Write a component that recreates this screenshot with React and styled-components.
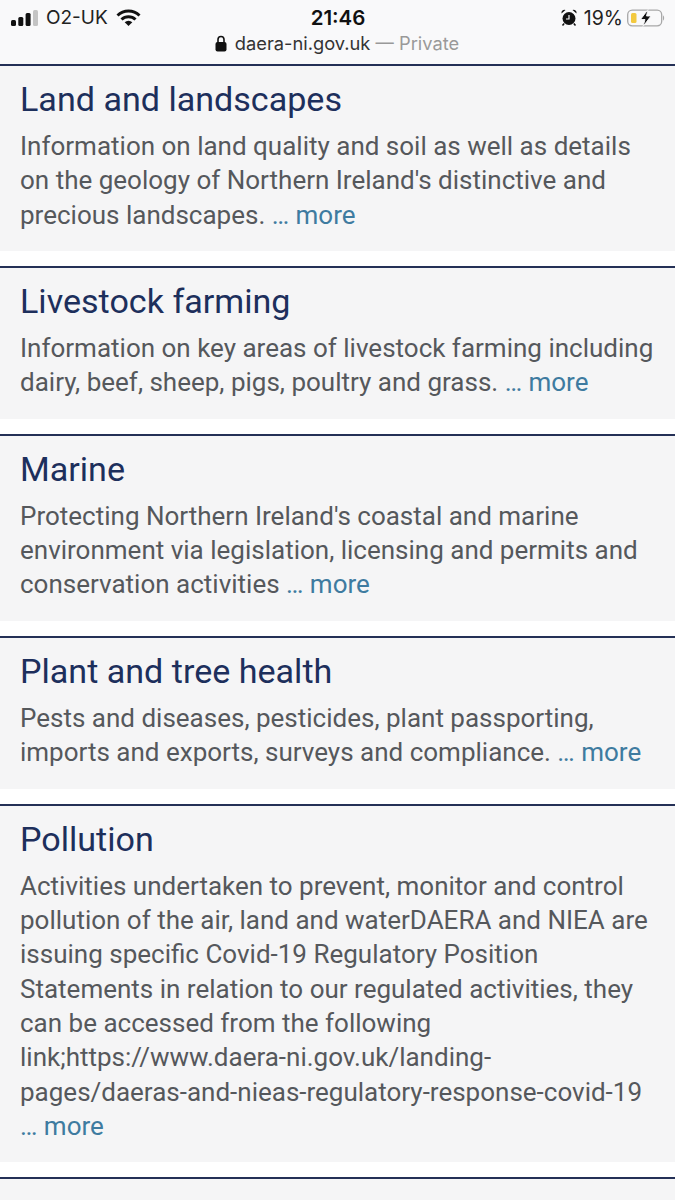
import React from 'react';
import styled, {createGlobalStyle} from 'styled-components';

const GlobalStyle = createGlobalStyle`
  html, body {
    margin: 0;
    padding: 0;
    background: #fff;
  }
  body {
    height: 1200px;
    overflow: hidden;
    font-family: Roboto, "Liberation Sans", sans-serif;
  }
`;

const Page = styled.div`
  width: 675px;
  height: 1200px;
  overflow: hidden;
  background: #fff;
`;

const Header = styled.header`
  height: 64px;
  box-sizing: border-box;
  padding: 5px 10px 0 11px;
  background: #f9f9fa;
  font-family: Inter, "Liberation Sans", sans-serif;
`;

const StatusBar = styled.div`
  display: grid;
  grid-template-columns: 1fr auto 1fr;
  align-items: center;
  height: 24px;
  color: #111;
`;

const StatusLeft = styled.div`
  display: flex;
  align-items: center;
  gap: 8px;
  font-size: 19px;
  color: #222;
`;

const StatusRight = styled.div`
  display: flex;
  align-items: center;
  justify-content: flex-end;
  font-size: 19.5px;
  color: #222;
`;

const Percent = styled.span`
  margin: 0 4px 0 7px;
`;

const Clock = styled.div`
  font-size: 20.5px;
  font-weight: 600;
`;

const UrlBar = styled.div`
  display: flex;
  justify-content: center;
  align-items: center;
  gap: 8px;
  height: 28px;
  padding-right: 2px;
  font-size: 18.3px;
  color: #333;
`;

const Private = styled.span`
  color: #999;
`;

const Topic = styled.section`
  border-top: 2px solid #243056;
  background: #f5f5f6;
  padding: 13px 20px 19.2px;
  margin-bottom: 15px;
`;

const Title = styled.h2`
  margin: 0 0 10px;
  font-size: 34.1px;
  line-height: 40px;
  font-weight: 400;
  color: #1d2f5c;
`;

const Summary = styled.p`
  margin: 0;
  font-size: 26px;
  line-height: 34.3px;
  color: #55585c;
`;

const More = styled.a`
  color: #3e7ba0;
`;

const topics = [
  {
    title: 'Land and landscapes',
    lines: ['Information on land quality and soil as well as details', "on the geology of Northern Ireland's distinctive and", 'precious landscapes. '],
  },
  {
    title: 'Livestock farming',
    lines: ['Information on key areas of livestock farming including', 'dairy, beef, sheep, pigs, poultry and grass. '],
  },
  {
    title: 'Marine',
    lines: ["Protecting Northern Ireland's coastal and marine", 'environment via legislation, licensing and permits and', 'conservation activities '],
  },
  {
    title: 'Plant and tree health',
    lines: ['Pests and diseases, pesticides, plant passporting,', 'imports and exports, surveys and compliance. '],
  },
  {
    title: 'Pollution',
    lines: [
      'Activities undertaken to prevent, monitor and control',
      'pollution of the air, land and waterDAERA and NIEA are',
      'issuing specific Covid-19 Regulatory Position',
      'Statements in relation to our regulated activities, they',
      'can be accessed from the following',
      'link;https://www.daera-ni.gov.uk/landing-',
      'pages/daeras-and-nieas-regulatory-response-covid-19',
      '',
    ],
  },
];

function SignalIcon() {
  return (
    <svg width="27" height="16" viewBox="0 0 27 16">
      <rect x="0" y="10" width="5" height="6" rx="1.5" fill="#111" />
      <rect x="7.3" y="7" width="5" height="9" rx="1.5" fill="#111" />
      <rect x="14.6" y="3" width="5" height="13" rx="1.5" fill="#111" />
      <rect x="22" y="0" width="5" height="16" rx="1.5" fill="#c4c4c4" />
    </svg>
  );
}

function WifiIcon() {
  return (
    <svg width="25" height="18" viewBox="0 0 25 18" fill="none" stroke="#111" strokeWidth="3">
      <path d="M1.5 6.5a16 16 0 0 1 22 0" />
      <path d="M5.5 10.5a10 10 0 0 1 14 0" />
      <path d="M12.5 17l-3.8-3.8a5.4 5.4 0 0 1 7.6 0z" fill="#111" stroke="none" />
    </svg>
  );
}

function LockIcon() {
  return (
    <svg width="12" height="17" viewBox="0 0 12 17">
      <path d="M3 8V4.5a3 3 0 0 1 6 0V8" fill="none" stroke="#111" strokeWidth="1.6" />
      <rect x="0.5" y="7" width="11" height="9.5" rx="2" fill="#111" />
    </svg>
  );
}

function AlarmIcon() {
  return (
    <svg width="16" height="17" viewBox="0 0 16 17">
      <circle cx="8" cy="9.5" r="6.5" fill="#111" />
      <path d="M8 6v4H5" fill="none" stroke="#f9f9fa" strokeWidth="1.2" />
      <path d="M0.5 4.5a3 3 0 0 1 4-3.5zM15.5 4.5a3 3 0 0 0-4-3.5z" fill="#111" />
      <path d="M3.2 14.5l-1.7 2M12.8 14.5l1.7 2" stroke="#111" strokeWidth="1.5" />
    </svg>
  );
}

function BatteryIcon() {
  return (
    <svg width="38" height="18" viewBox="0 0 38 18">
      <rect x="0.7" y="1.2" width="34" height="15.6" rx="4.5" fill="none" stroke="#a8a8a8" strokeWidth="1.3" />
      <rect x="4" y="4" width="5.5" height="10" rx="1.5" fill="#f3c93f" />
      <path d="M36 6.5c1.5.5 1.5 4.5 0 5z" fill="#a8a8a8" />
      <path d="M21 0.5l-7.5 10h4.5L16 17.5l8-10.5h-4.5z" fill="#111" stroke="#f9f9fa" strokeWidth="0.9" />
    </svg>
  );
}

export default function App() {
  return (
    <Page>
      <GlobalStyle />
      <Header>
        <StatusBar>
          <StatusLeft>
            <SignalIcon />
            <span>O2-UK</span>
            <WifiIcon />
          </StatusLeft>
          <Clock>21:46</Clock>
          <StatusRight>
            <AlarmIcon />
            <Percent>19%</Percent>
            <BatteryIcon />
          </StatusRight>
        </StatusBar>
        <UrlBar>
          <LockIcon />
          <span>daera-ni.gov.uk <Private>— Private</Private></span>
        </UrlBar>
      </Header>
      {topics.map((topic) => (
        <Topic key={topic.title}>
          <Title>{topic.title}</Title>
          <Summary>
            {topic.lines.map((line, i) => (
              <React.Fragment key={i}>
                {line}
                {i < topic.lines.length - 1 ? <br /> : <More>… more</More>}
              </React.Fragment>
            ))}
          </Summary>
        </Topic>
      ))}
      {/* next card starts at the very bottom, its heading is below the fold */}
      <Topic />
    </Page>
  );
}
